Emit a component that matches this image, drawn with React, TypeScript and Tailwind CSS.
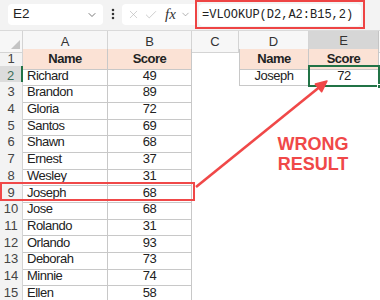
import React from "react";
import { ChevronDown, EllipsisVertical, X, Check } from "lucide-react";

const data: [string, number][] = [
  ["Richard", 49],
  ["Brandon", 89],
  ["Gloria", 72],
  ["Santos", 69],
  ["Shawn", 68],
  ["Ernest", 37],
  ["Wesley", 31],
  ["Joseph", 68],
  ["Jose", 68],
  ["Rolando", 31],
  ["Orlando", 93],
  ["Deborah", 73],
  ["Minnie", 74],
  ["Ellen", 58],
];

const grid = "grid grid-cols-[23px_85px_84px_47px_70px_70px_1fr]";
const cellFont =
  "font-['Liberation_Sans',Arial,sans-serif] text-[13px] tracking-[-0.5px] text-[#222]";

function RowHeader({ n, selected }: { n: number; selected?: boolean }) {
  return (
    <div
      className={
        "flex items-center justify-center border-b border-[#e0e0e0] text-[13px] tracking-normal " +
        (selected
          ? "bg-[#dcdcdc] text-[#3c6e58] border-r-2 border-r-[#217346]"
          : "bg-[#f3f3f3] text-[#444] border-r border-r-[#d4d4d4]")
      }
    >
      {n}
    </div>
  );
}

export default function App() {
  return (
    <div className="relative w-[380px] h-[300px] overflow-hidden bg-white font-['Liberation_Sans',Arial,sans-serif]">
      {/* Toolbar */}
      <div className="h-[31px] bg-[#f3f3f3] border-b border-[#dadada] flex items-start">
        <div className="ml-[8px] mt-[4px] w-[95px] h-[21px] bg-white rounded-[4px] flex items-center justify-between pl-[5px] pr-[5px] text-[13.5px] text-[#222]">
          <span>E2</span>
          <ChevronDown size={12} strokeWidth={1.6} className="text-[#555]" />
        </div>
        <div className="ml-[3px] mt-[7px] w-[14px] flex justify-center">
          <EllipsisVertical size={14} strokeWidth={2.4} className="text-[#333]" />
        </div>
        <div className="ml-[2px] mt-[4px] w-[73px] h-[21px] bg-white rounded-l-[4px] flex items-center pl-[5px] gap-[4px]">
          <X size={13} strokeWidth={1.2} className="text-[#b8b8b8]" />
          <Check size={14} strokeWidth={1.2} className="text-[#b8b8b8]" />
          <span className="ml-[3px] font-['Liberation_Serif',serif] italic text-[15px] text-[#333] leading-none">
            fx
          </span>
          <ChevronDown size={11} strokeWidth={1.4} className="text-[#888]" />
        </div>
        <div className="w-[170px] h-[29px] border-2 border-[#ee4444] flex items-center px-[2px]">
          <div className="flex-1 h-[22px] bg-white rounded-[4px] flex items-center pl-[3px] font-['Liberation_Mono',monospace] text-[12px] text-[#222]">
            =VLOOKUP(D2,A2:B15,2)
          </div>
        </div>
      </div>

      {/* Column headers */}
      <div className={grid + " h-[18px] text-[13px] text-[#333]"}>
        <div className="relative bg-[#f7f7f7] border-r border-b border-[#d4d4d4]">
          <svg className="absolute right-[2px] bottom-[3px]" width="9" height="9" viewBox="0 0 9 9">
            <polygon points="9,0 9,9 0,9" fill="#c4c4c4" />
          </svg>
        </div>
        <div className="flex items-center justify-center bg-[#f7f7f7] border-r border-b border-[#d4d4d4]">A</div>
        <div className="flex items-center justify-center bg-[#f7f7f7] border-r border-b border-[#d4d4d4]">B</div>
        <div className="flex items-center justify-center bg-[#f7f7f7] border-r border-b border-[#d4d4d4]">C</div>
        <div className="flex items-center justify-center bg-[#f7f7f7] border-r border-b border-[#d4d4d4]">D</div>
        <div className="flex items-center justify-center bg-[#d6d6d6] border-r border-[#c4c4c4] border-b-2 border-b-[#217346]">E</div>
        <div className="bg-[#f7f7f7] border-b border-[#d4d4d4]"></div>
      </div>

      {/* Row 1 */}
      <div className={grid + " h-[16.7px] " + cellFont}>
        <RowHeader n={1} />
        <div className="flex items-center justify-center font-bold bg-[#fbe2d5] border-r border-b border-[#c8c8c8]">Name</div>
        <div className="flex items-center justify-center font-bold bg-[#fbe2d5] border-r border-b border-[#c8c8c8]">Score</div>
        <div></div>
        <div className="flex items-center justify-center font-bold bg-[#fbe2d5] border-l border-r border-b border-[#c8c8c8]">Name</div>
        <div className="flex items-center justify-center font-bold bg-[#fbe2d5] border-r border-b border-[#c8c8c8]">Score</div>
        <div></div>
      </div>

      {data.map(([name, score], i) => {
        const n = i + 2;
        return (
          <div key={n} className={grid + " h-[16.7px] " + cellFont}>
            <RowHeader n={n} selected={n === 2} />
            <div className="flex items-center pl-[4px] border-r border-b border-[#c8c8c8]">{name}</div>
            <div className="flex items-center justify-center border-r border-b border-[#c8c8c8]">{score}</div>
            <div></div>
            {n === 2 ? (
              <>
                <div className="flex items-center justify-center border-l border-r border-b border-[#c8c8c8]">Joseph</div>
                <div className="relative flex items-center justify-center">
                  72
                  <div className="absolute left-[-1px] top-[-1px] right-[-1px] bottom-[-1px] border-2 border-[#217346]"></div>
                  <div className="absolute right-[-3px] bottom-[-3px] w-[5px] h-[5px] bg-[#217346] border border-white"></div>
                </div>
              </>
            ) : (
              <>
                <div></div>
                <div></div>
              </>
            )}
            <div></div>
          </div>
        );
      })}

      {/* Annotations */}
      <div className="absolute left-0 top-[181.5px] w-[195px] h-[19.5px] border-2 border-[#f04848]"></div>
      <svg className="absolute left-0 top-0 pointer-events-none" width="380" height="300" viewBox="0 0 380 300">
        <line x1="196" y1="187" x2="319" y2="87.5" stroke="#f04848" strokeWidth="2.6" />
        <polygon points="327,81 321.6,91.8 315.3,84" fill="#f04848" stroke="#f04848" strokeWidth="1.5" strokeLinejoin="round" />
      </svg>
      <div className="absolute left-[263px] top-[134px] w-[100px] text-center font-bold text-[18px] leading-[20px] text-[#f04848] font-['Liberation_Sans',Arial,sans-serif]">
        WRONG
        <br />
        RESULT
      </div>
    </div>
  );
}
